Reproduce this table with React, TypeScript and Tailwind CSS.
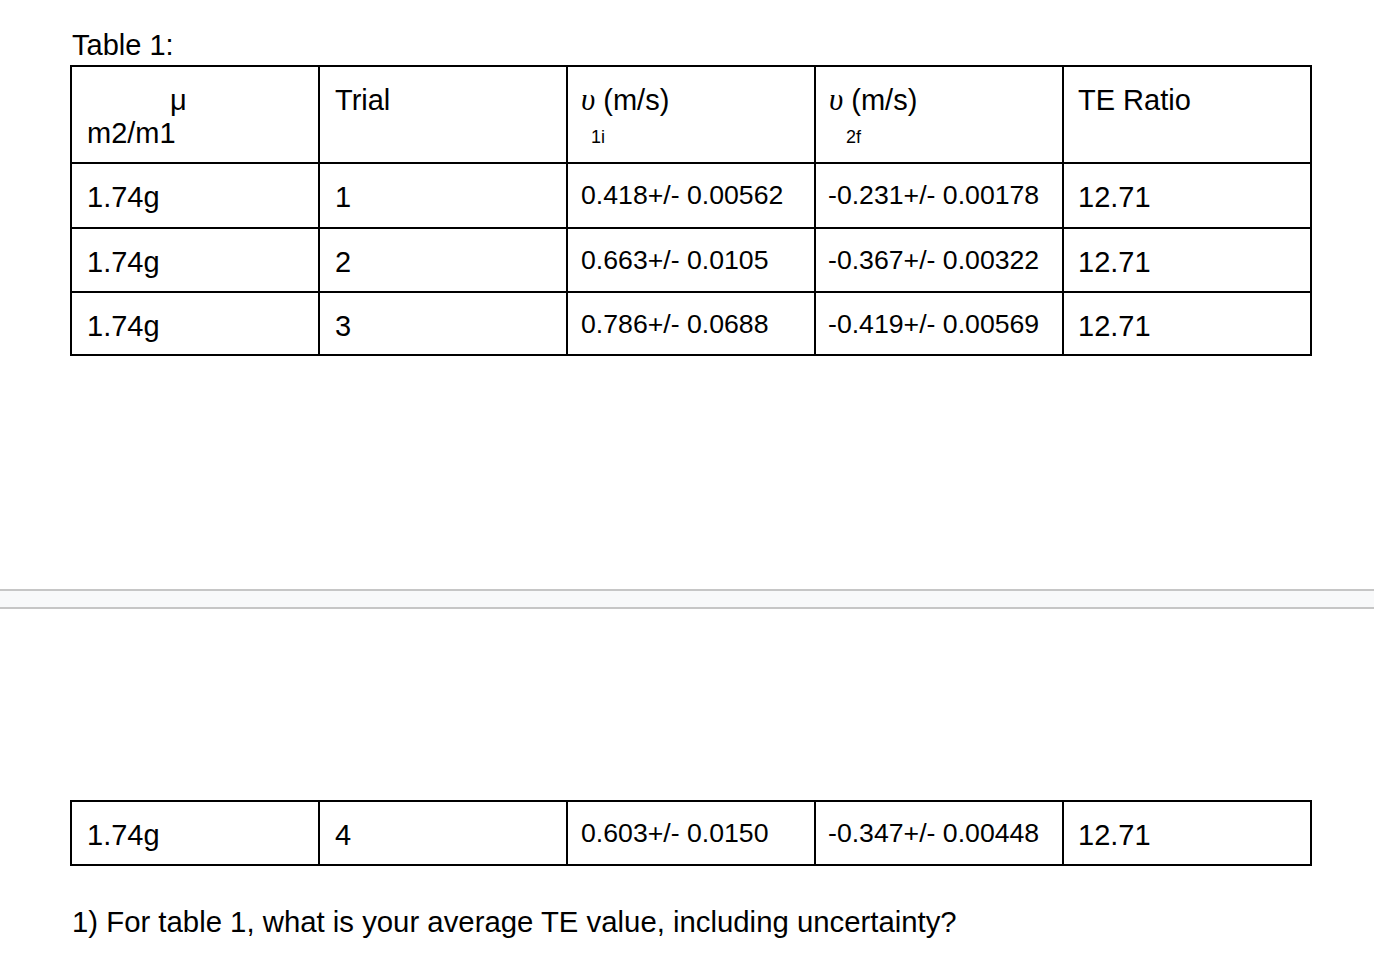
import React from "react"

const sans = { fontFamily: '"Liberation Sans", Arial, sans-serif' }

type Row = { mu: string; trial: string; v1: string; v2: string; te: string; h: string }

const rows: Row[] = [
  { mu: "1.74g", trial: "1", v1: "0.418+/- 0.00562", v2: "-0.231+/- 0.00178", te: "12.71", h: "h-[63px]" },
  { mu: "1.74g", trial: "2", v1: "0.663+/- 0.0105", v2: "-0.367+/- 0.00322", te: "12.71", h: "h-[62px]" },
  { mu: "1.74g", trial: "3", v1: "0.786+/- 0.0688", v2: "-0.419+/- 0.00569", te: "12.71", h: "h-[61px]" },
]

function DataRow({ r }: { r: Row }) {
  return (
    <>
      <div className={`${r.h} bg-white pl-[15px] pt-[16px] text-[29px] leading-[34px]`}>{r.mu}</div>
      <div className={`${r.h} bg-white pl-[15px] pt-[16px] text-[29px] leading-[34px]`}>{r.trial}</div>
      <div className={`${r.h} bg-white pl-[13px] pt-[15px] text-[26.67px] leading-[32px]`}>{r.v1}</div>
      <div className={`${r.h} bg-white pl-[12px] pt-[15px] text-[26.67px] leading-[32px]`}>{r.v2}</div>
      <div className={`${r.h} bg-white pl-[14px] pt-[16px] text-[29px] leading-[34px]`}>{r.te}</div>
    </>
  )
}

function Velocity({ sub, indent }: { sub: string; indent: string }) {
  return (
    <div>
      <div className="text-[29px] leading-[34px]">
        <span className="italic text-[31px]" style={{ fontFamily: '"Liberation Serif", "Times New Roman", serif' }}>υ</span> (m/s)
      </div>
      <div className={`${indent} text-[18px] leading-[22px] mt-[9px]`}>{sub}</div>
    </div>
  )
}

export default function App() {
  return (
    <div className="min-h-[971px] w-[1374px] bg-white text-black pt-[28px]" style={sans}>
      <p className="pl-[72px] text-[29px] leading-[34px]">Table 1:</p>

      <div className="ml-[70px] mt-[3px] grid w-fit grid-cols-[repeat(5,246px)] gap-[2px] bg-black p-[2px]">
        <div className="h-[95px] bg-white pl-[15px] pt-[16px]">
          <div className="pl-[83px] text-[29px] leading-[34px]">μ</div>
          <div className="mt-[1px] text-[29px] leading-[30px]">m2/m1</div>
        </div>
        <div className="h-[95px] bg-white pl-[15px] pt-[16px] text-[29px] leading-[34px]">Trial</div>
        <div className="h-[95px] bg-white pl-[13px] pt-[16px]">
          <Velocity sub="1i" indent="pl-[10px]" />
        </div>
        <div className="h-[95px] bg-white pl-[13px] pt-[16px]">
          <Velocity sub="2f" indent="pl-[17px]" />
        </div>
        <div className="h-[95px] bg-white pl-[14px] pt-[16px] text-[29px] leading-[34px]">TE Ratio</div>
        {rows.map((r) => (
          <DataRow key={r.trial} r={r} />
        ))}
      </div>

      {/* page break */}
      <div className="mt-[233px] h-[20px] border-y-2 border-[#c6c6c6] bg-[#f8f9fa]" />

      <div className="ml-[70px] mt-[191px] grid w-fit grid-cols-[repeat(5,246px)] gap-[2px] bg-black p-[2px]">
        <DataRow r={{ mu: "1.74g", trial: "4", v1: "0.603+/- 0.0150", v2: "-0.347+/- 0.00448", te: "12.71", h: "h-[62px]" }} />
      </div>

      <p className="mt-[39px] pl-[72px] text-[29.33px] leading-[34px]">
        1) For table 1, what is your average TE value, including uncertainty?
      </p>
    </div>
  )
}
